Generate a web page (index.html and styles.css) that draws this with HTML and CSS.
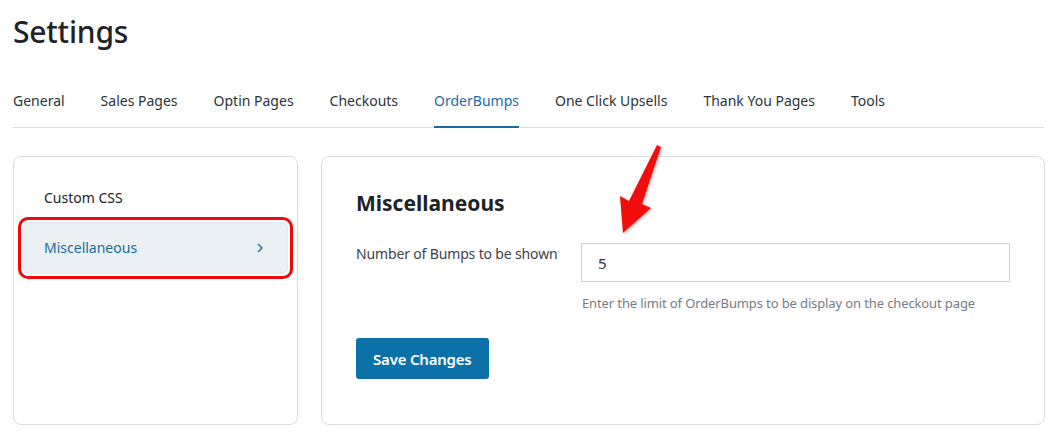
FILE: index.html
```html
<!DOCTYPE html>
<html lang="en">
<head>
<meta charset="utf-8">
<title>Settings</title>
<link rel="stylesheet" href="styles.css">
</head>
<body>
<div class="page">
  <h1 class="title">Settings</h1>
  <nav class="tabs">
    <a class="tab">General</a>
    <a class="tab">Sales Pages</a>
    <a class="tab">Optin Pages</a>
    <a class="tab">Checkouts</a>
    <a class="tab active">OrderBumps</a>
    <a class="tab">One Click Upsells</a>
    <a class="tab">Thank You Pages</a>
    <a class="tab">Tools</a>
  </nav>
  <div class="layout">
    <aside class="card side">
      <div class="side-item">Custom CSS</div>
      <div class="side-item active">
        <span>Miscellaneous</span>
        <svg class="chev" width="6" height="10" viewBox="0 0 6 10"><path d="M1 1 L5 5 L1 9" fill="none" stroke="currentColor" stroke-width="1.4"/></svg>
      </div>
    </aside>
    <section class="card main">
      <h2 class="heading">Miscellaneous</h2>
      <div class="field">
        <label class="label">Number of Bumps to be shown</label>
        <div class="control">
          <input class="input" type="text" value="5">
          <p class="help">Enter the limit of OrderBumps to be display on the checkout page</p>
        </div>
      </div>
      <button class="btn">Save Changes</button>
    </section>
  </div>
  <svg class="arrow" width="80" height="100" viewBox="0 0 80 100">
    <defs>
      <filter id="sh" x="-30%" y="-30%" width="160%" height="160%">
        <feDropShadow dx="1" dy="1.5" stdDeviation="1.5" flood-color="#000" flood-opacity="0.3"/>
      </filter>
    </defs>
    <polygon points="57,5 61,7 42,64 51,68 23,93 20,56 29,61" fill="#f20d0d" filter="url(#sh)"/>
  </svg>
</div>
</body>
</html>
```
FILE: styles.css
```css
* { box-sizing: border-box; }
html, body { margin: 0; padding: 0; background: #fff; }
body {
  font-family: "Noto Sans", "Open Sans", Arial, sans-serif;
  color: #2c3338;
}
.page {
  position: relative;
  padding: 12px 12px 0 13px;
}
.title {
  margin: 0;
  font-size: 30px;
  font-weight: 500;
  line-height: 40px;
  color: #1d2327;
  letter-spacing: -0.2px;
}
.tabs {
  display: flex;
  gap: 36px;
  margin-top: 27px;
  border-bottom: 1px solid #dcdcde;
}
.tab {
  display: block;
  padding: 12px 0 15px;
  font-size: 14px;
  line-height: 20px;
  color: #2c3338;
  border-bottom: 2px solid transparent;
  margin-bottom: -1px;
}
.tab.active {
  color: #1b6b9e;
  border-bottom-color: #1b6b9e;
}
.layout {
  display: grid;
  grid-template-columns: 285px 1fr;
  gap: 23px;
  margin-top: 28px;
  height: 269px;
}
.card {
  border: 1px solid #dcdcde;
  border-radius: 8px;
  background: #fff;
}
.side {
  padding: 16px 9px;
}
.side-item {
  display: flex;
  align-items: center;
  justify-content: space-between;
  height: 50px;
  padding: 0 25px 0 21px;
  font-size: 14px;
  line-height: 20px;
  color: #1d2327;
  border-radius: 5px;
}
.side-item.active {
  height: 52px;
  margin-top: -1px;
  color: #1b6b9e;
  background: #eaf0f4;
  box-shadow: inset 0 0 3px rgba(0,0,0,0.06);
  outline: 3px solid #ee0a0a;
  outline-offset: 2px;
}
.chev { color: #1b6b9e; }
.main {
  padding: 32px 34px;
}
.heading {
  margin: 0;
  font-size: 21px;
  line-height: 28px;
  font-weight: 700;
  color: #1d2327;
}
.field {
  display: flex;
  margin-top: 26px;
}
.label {
  width: 225px;
  flex: none;
  padding-top: 1px;
  font-size: 14px;
  line-height: 20px;
  color: #3c434a;
  letter-spacing: -0.15px;
}
.control {
  width: 429px;
}
.input {
  display: block;
  width: 100%;
  height: 39px;
  border: 1px solid #d0d3d6;
  border-radius: 0;
  padding: 0 16px;
  font-family: inherit;
  font-size: 15px;
  color: #2c3338;
  background: #fff;
}
.help {
  margin: 12px 0 0 1px;
  font-size: 13px;
  line-height: 18px;
  color: #787c82;
  letter-spacing: -0.12px;
}
.btn {
  display: block;
  margin-top: 26px;
  height: 41px;
  padding: 0 17px;
  border: none;
  border-radius: 3px;
  background: #0b71a8;
  color: #fff;
  font-family: inherit;
  font-size: 15px;
  font-weight: 600;
  letter-spacing: -0.2px;
}
.arrow {
  position: absolute;
  left: 600px;
  top: 140px;
}
```
